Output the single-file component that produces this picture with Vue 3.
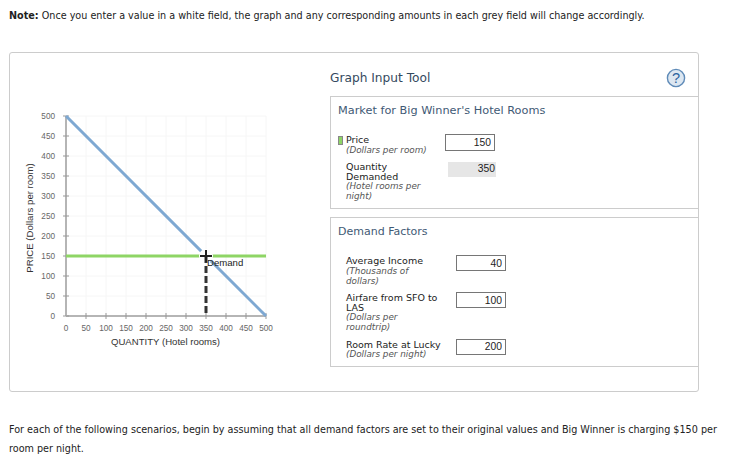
<template>
  <div class="page">
    <p class="note"><b>Note:</b> Once you enter a value in a white field, the graph and any corresponding amounts in each grey field will change accordingly.</p>

    <div class="card">
      <div class="graph-col">
        <svg class="graph" width="320" height="338" viewBox="10 53 320 338">
          <!-- grid -->
          <line v-for="t in ticks" :key="'gx' + t" :x1="xPos(t)" y1="116" :x2="xPos(t)" y2="316" stroke="#f6f6f6" />
          <line v-for="t in ticks" :key="'gy' + t" x1="66" :y1="yPos(t)" x2="266" :y2="yPos(t)" stroke="#f6f6f6" />

          <!-- axes -->
          <line x1="66" y1="116" x2="66" y2="316" stroke="#b5b5b5" stroke-width="2" />
          <line x1="66" y1="316" x2="266" y2="316" stroke="#b5b5b5" stroke-width="2" />
          <line v-for="t in ticks" :key="'ty' + t" x1="63" :y1="yPos(t)" x2="69" :y2="yPos(t)" stroke="#999" />
          <line v-for="t in ticks.slice(1)" :key="'tx' + t" :x1="xPos(t)" y1="313" :x2="xPos(t)" y2="319" stroke="#999" />

          <text v-for="t in ticks" :key="'ly' + t" x="55" :y="yPos(t) + 3" text-anchor="end" class="tick">{{ t }}</text>
          <text v-for="t in ticks" :key="'lx' + t" :x="xPos(t)" y="331" text-anchor="middle" class="tick">{{ t }}</text>

          <text x="165.5" y="345" text-anchor="middle" class="axis-title">QUANTITY (Hotel rooms)</text>
          <text transform="translate(33 218) rotate(-90)" text-anchor="middle" class="axis-title">PRICE (Dollars per room)</text>

          <!-- curves -->
          <line x1="66" y1="116" x2="266" y2="316" stroke="#7ea8d2" stroke-width="3" />
          <line x1="66" y1="256" x2="266" y2="256" stroke="#8ed565" stroke-width="3" />
          <circle cx="206" cy="256" r="7" fill="#fff" />
          <line x1="206" y1="256" x2="206" y2="316" stroke="#333" stroke-width="3" stroke-dasharray="7 3" />
          <line x1="200" y1="256" x2="212" y2="256" stroke="#222" stroke-width="2" />
          <line x1="206" y1="250" x2="206" y2="262" stroke="#222" stroke-width="2" />
          <text x="207" y="266" class="curve-label">Demand</text>
        </svg>
      </div>

      <div class="tool-col">
        <div class="tool-head">
          <span class="tool-title">Graph Input Tool</span>
          <svg class="help" width="20" height="20" viewBox="0 0 20 20">
            <circle cx="10" cy="10" r="8.6" fill="#dde7f1" stroke="#5f8bb8" stroke-width="1.4" />
            <text x="10" y="15" text-anchor="middle" class="help-mark">?</text>
          </svg>
        </div>

        <section class="box market">
          <h3>Market for Big Winner's Hotel Rooms</h3>
          <div class="row price">
            <span class="swatch"></span>
            <div class="label"><span>Price</span><em>(Dollars per room)</em></div>
            <input class="field" value="150" />
          </div>
          <div class="row qty">
            <div class="label"><span>Quantity Demanded</span><em>(Hotel rooms per night)</em></div>
            <div class="readout">350</div>
          </div>
        </section>

        <section class="box factors">
          <h3>Demand Factors</h3>
          <div v-for="f in factors" :key="f.name" class="row factor">
            <div class="label"><span>{{ f.name }}</span><em>{{ f.unit }}</em></div>
            <input class="field" :value="f.value" />
          </div>
        </section>
      </div>
    </div>

    <p class="scenario">For each of the following scenarios, begin by assuming that all demand factors are set to their original values and Big Winner is charging $150 per room per night.</p>
  </div>
</template>

<script setup>
const ticks = [0, 50, 100, 150, 200, 250, 300, 350, 400, 450, 500]
const xPos = (v) => 66 + v * 0.4
const yPos = (v) => 316 - v * 0.4

const factors = [
  { name: 'Average Income', unit: '(Thousands of dollars)', value: 40 },
  { name: 'Airfare from SFO to LAS', unit: '(Dollars per roundtrip)', value: 100 },
  { name: 'Room Rate at Lucky', unit: '(Dollars per night)', value: 200 },
]
</script>

<style>
html, body {
  margin: 0;
  background: #fff;
}
</style>

<style scoped>
.page {
  width: 735px;
  height: 469px;
  overflow: hidden;
  padding: 0 9px;
  box-sizing: border-box;
  font-family: "DejaVu Sans", Verdana, sans-serif;
  color: #222;
}
.note {
  margin: 0;
  padding-top: 9px;
  height: 52px;
  box-sizing: border-box;
  font-size: 9.65px;
  line-height: 13px;
}
.card {
  display: flex;
  width: 690px;
  height: 340px;
  box-sizing: border-box;
  border: 1px solid #ccc;
  border-radius: 3px;
}
.graph-col {
  width: 320px;
  flex: none;
}
.graph {
  display: block;
}
.tick {
  font: 8.2px "Liberation Sans", Arial, sans-serif;
  fill: #666;
}
.axis-title {
  font: 9.6px "Liberation Sans", Arial, sans-serif;
  fill: #333;
}
.curve-label {
  font: 9.6px "Liberation Sans", Arial, sans-serif;
  fill: #222;
}
.tool-col {
  flex: 1;
  min-width: 0;
}
.tool-head {
  display: flex;
  align-items: center;
  justify-content: space-between;
  height: 43px;
  padding-top: 7px;
  box-sizing: border-box;
  padding-right: 12px;
}
.tool-title {
  font-size: 12.2px;
  color: #34495e;
}
.help {
  display: block;
}
.help-mark {
  font: 14.5px "Liberation Sans", Arial, sans-serif;
  fill: #2d639e;
}
.box {
  border: 1px solid #ccc;
  border-right: 0;
  padding: 7px 7px 0;
  box-sizing: border-box;
}
.box h3 {
  margin: 0 0 16px;
  font-weight: normal;
  font-size: 11.3px;
  line-height: 14px;
  color: #3f5a75;
}
.factors h3 {
  font-size: 11px;
}
.market {
  height: 113px;
}
.factors {
  height: 150px;
  margin-top: 8px;
}
.row {
  display: flex;
  align-items: flex-start;
  padding-left: 8px;
  position: relative;
}
.label {
  margin-top: 1px;
  font-size: 9.5px;
  line-height: 9.5px;
  color: #222;
}
.label span,
.label em {
  display: block;
}
.label em {
  max-width: 88px;
  font-size: 8.8px;
  line-height: 10px;
  color: #555;
}
.price .label {
  width: 99px;
}
.swatch {
  position: absolute;
  left: 0;
  top: 2px;
  width: 3px;
  height: 7px;
  background: #8ed565;
  border: 1px solid #888;
}
.qty {
  margin-top: 7.5px;
}
.qty .label {
  width: 84px;
  margin-top: 0;
}
.factor {
  margin-bottom: 6.5px;
}
.factor .label {
  width: 110px;
}
.field {
  width: 50px;
  height: 16px;
  box-sizing: border-box;
  border: 1px solid #767676;
  padding: 0 3px;
  margin: 0;
  font: 10.3px "Liberation Sans", Arial, sans-serif;
  text-align: right;
  color: #222;
  background: #fff;
  outline: none;
}
.price .field {
  height: 17px;
}
.readout {
  width: 48px;
  height: 15px;
  margin-left: 18px;
  padding-right: 1px;
  box-sizing: border-box;
  font: 10.3px/14px "Liberation Sans", Arial, sans-serif;
  text-align: right;
  background: #e6e6e6;
  color: #222;
}
.scenario {
  margin: 28px 0 0;
  font-size: 9.65px;
  line-height: 19px;
  width: 716px;
}
</style>
